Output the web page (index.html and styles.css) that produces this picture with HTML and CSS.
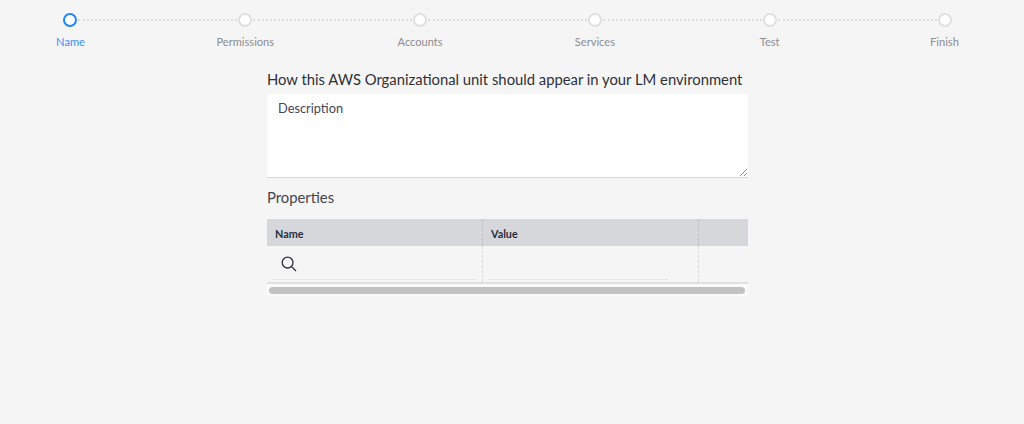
FILE: index.html
```html
<!DOCTYPE html>
<html lang="en">
<head>
<meta charset="utf-8">
<title>Add AWS Organizational unit</title>
<link rel="stylesheet" href="styles.css">
</head>
<body>
<div class="stepper">
  <div class="rail">
    <span class="dot dot-active"></span><span class="link"></span>
    <span class="dot"></span><span class="link"></span>
    <span class="dot"></span><span class="link"></span>
    <span class="dot"></span><span class="link"></span>
    <span class="dot"></span><span class="link"></span>
    <span class="dot"></span>
  </div>
  <div class="labels">
    <span class="label label-active">Name</span>
    <span class="label">Permissions</span>
    <span class="label">Accounts</span>
    <span class="label">Services</span>
    <span class="label">Test</span>
    <span class="label">Finish</span>
  </div>
</div>
<main class="form">
  <div class="heading">How this AWS Organizational unit should appear in your LM environment</div>
  <div class="desc">
    <span class="desc-text">Description</span>
    <svg class="grip" width="8" height="8" viewBox="0 0 8 8"><path d="M1 8L8 1M5 8L8 5" stroke="#8a8a8a" stroke-width="1" fill="none"/></svg>
  </div>
  <div class="sub">Properties</div>
  <div class="table">
    <div class="thead">
      <div class="th th-name">Name</div>
      <div class="th th-value">Value</div>
      <div class="th th-rest"></div>
    </div>
    <div class="tbody">
      <div class="td td-name">
        <div class="search">
          <svg class="search-icon" width="18" height="18" viewBox="0 0 18 18"><circle cx="7.6" cy="7.6" r="5.4" fill="none" stroke="#2c2f3a" stroke-width="1.3"/><path d="M11.6 11.6L16 16" stroke="#2c2f3a" stroke-width="1.3" fill="none"/></svg>
        </div>
      </div>
      <div class="td td-value"><div class="value-line"></div></div>
      <div class="td td-rest"></div>
    </div>
    <div class="scroll"><div class="thumb"></div></div>
  </div>
</main>
</body>
</html>
```
FILE: styles.css
```css
* { box-sizing: border-box; }
html, body { margin: 0; height: 100%; }
body {
  background: #f5f5f5;
  font-family: "Lato", "Noto Sans", sans-serif;
  color: #2f3140;
  overflow: hidden;
}
.stepper { padding-top: 13px; }
.rail {
  display: flex;
  align-items: center;
  margin: 0 72.5px 0 63px;
  height: 14px;
}
.dot {
  flex: none;
  width: 14px;
  height: 14px;
  border-radius: 50%;
  background: #fff;
  border: 2px solid #e0e0e0;
}
.dot-active { border-color: #1f86f5; }
.link {
  flex: 1;
  margin: 0 1px;
  border-top: 2px dotted #dcdcdc;
}
.labels {
  display: flex;
  justify-content: space-between;
  margin: 8px 49.5px 0 40.5px;
}
.label {
  width: 60px;
  text-align: center;
  font-size: 11.1px;
  line-height: 14px;
  color: #8d8d92;
}
.label-active { color: #3b8ff3; }
.form {
  width: 481px;
  margin: 20px 0 0 267px;
}
.heading {
  font-size: 14.8px;
  line-height: 20px;
  white-space: nowrap;
  color: #2f3038;
}
.desc {
  position: relative;
  height: 84px;
  margin-top: 5px;
  padding: 3px 11px;
  background: #fff;
  border-bottom: 1px solid #d6d6d6;
  border-radius: 2px 2px 0 0;
}
.desc-text {
  font-size: 12.8px;
  line-height: 16px;
  color: #44475a;
}
.grip { position: absolute; right: 1px; bottom: 1px; }
.sub {
  margin-top: 9px;
  font-size: 14.8px;
  line-height: 20px;
  color: #43454f;
}
.table { margin-top: 12px; }
.thead {
  display: grid;
  grid-template-columns: 216px 216px 49px;
  grid-template-rows: 27px;
  height: 27px;
  background: #d6d7db;
}
.th {
  font-size: 10.8px;
  font-weight: 700;
  line-height: 27px;
  padding: 1px 0 0 8px;
  color: #2a2d3e;
  border-right: 1px dashed #bfc0c5;
}
.th-rest { border-right: 0; }
.tbody {
  display: grid;
  grid-template-columns: 216px 216px 49px;
  height: 38px;
  border-bottom: 2px solid #e0e0e0;
}
.td { border-right: 1px dashed #d8d8d8; }
.td-rest { border-right: 0; }
.td-name { padding: 0 5px; }
.search {
  height: 34px;
  padding: 9px 0 0 8px;
  border-bottom: 1px solid #e6e6e6;
}
.search-icon { display: block; }
.td-value { padding-left: 5px; }
.value-line {
  width: 180px;
  height: 34px;
  border-bottom: 1px solid #e6e6e6;
}
.scroll {
  height: 12px;
  padding: 3px 3px 2px 2px;
  background: #fafafa;
}
.thumb {
  height: 7px;
  border-radius: 4px;
  background: #c2c2c2;
}
```
